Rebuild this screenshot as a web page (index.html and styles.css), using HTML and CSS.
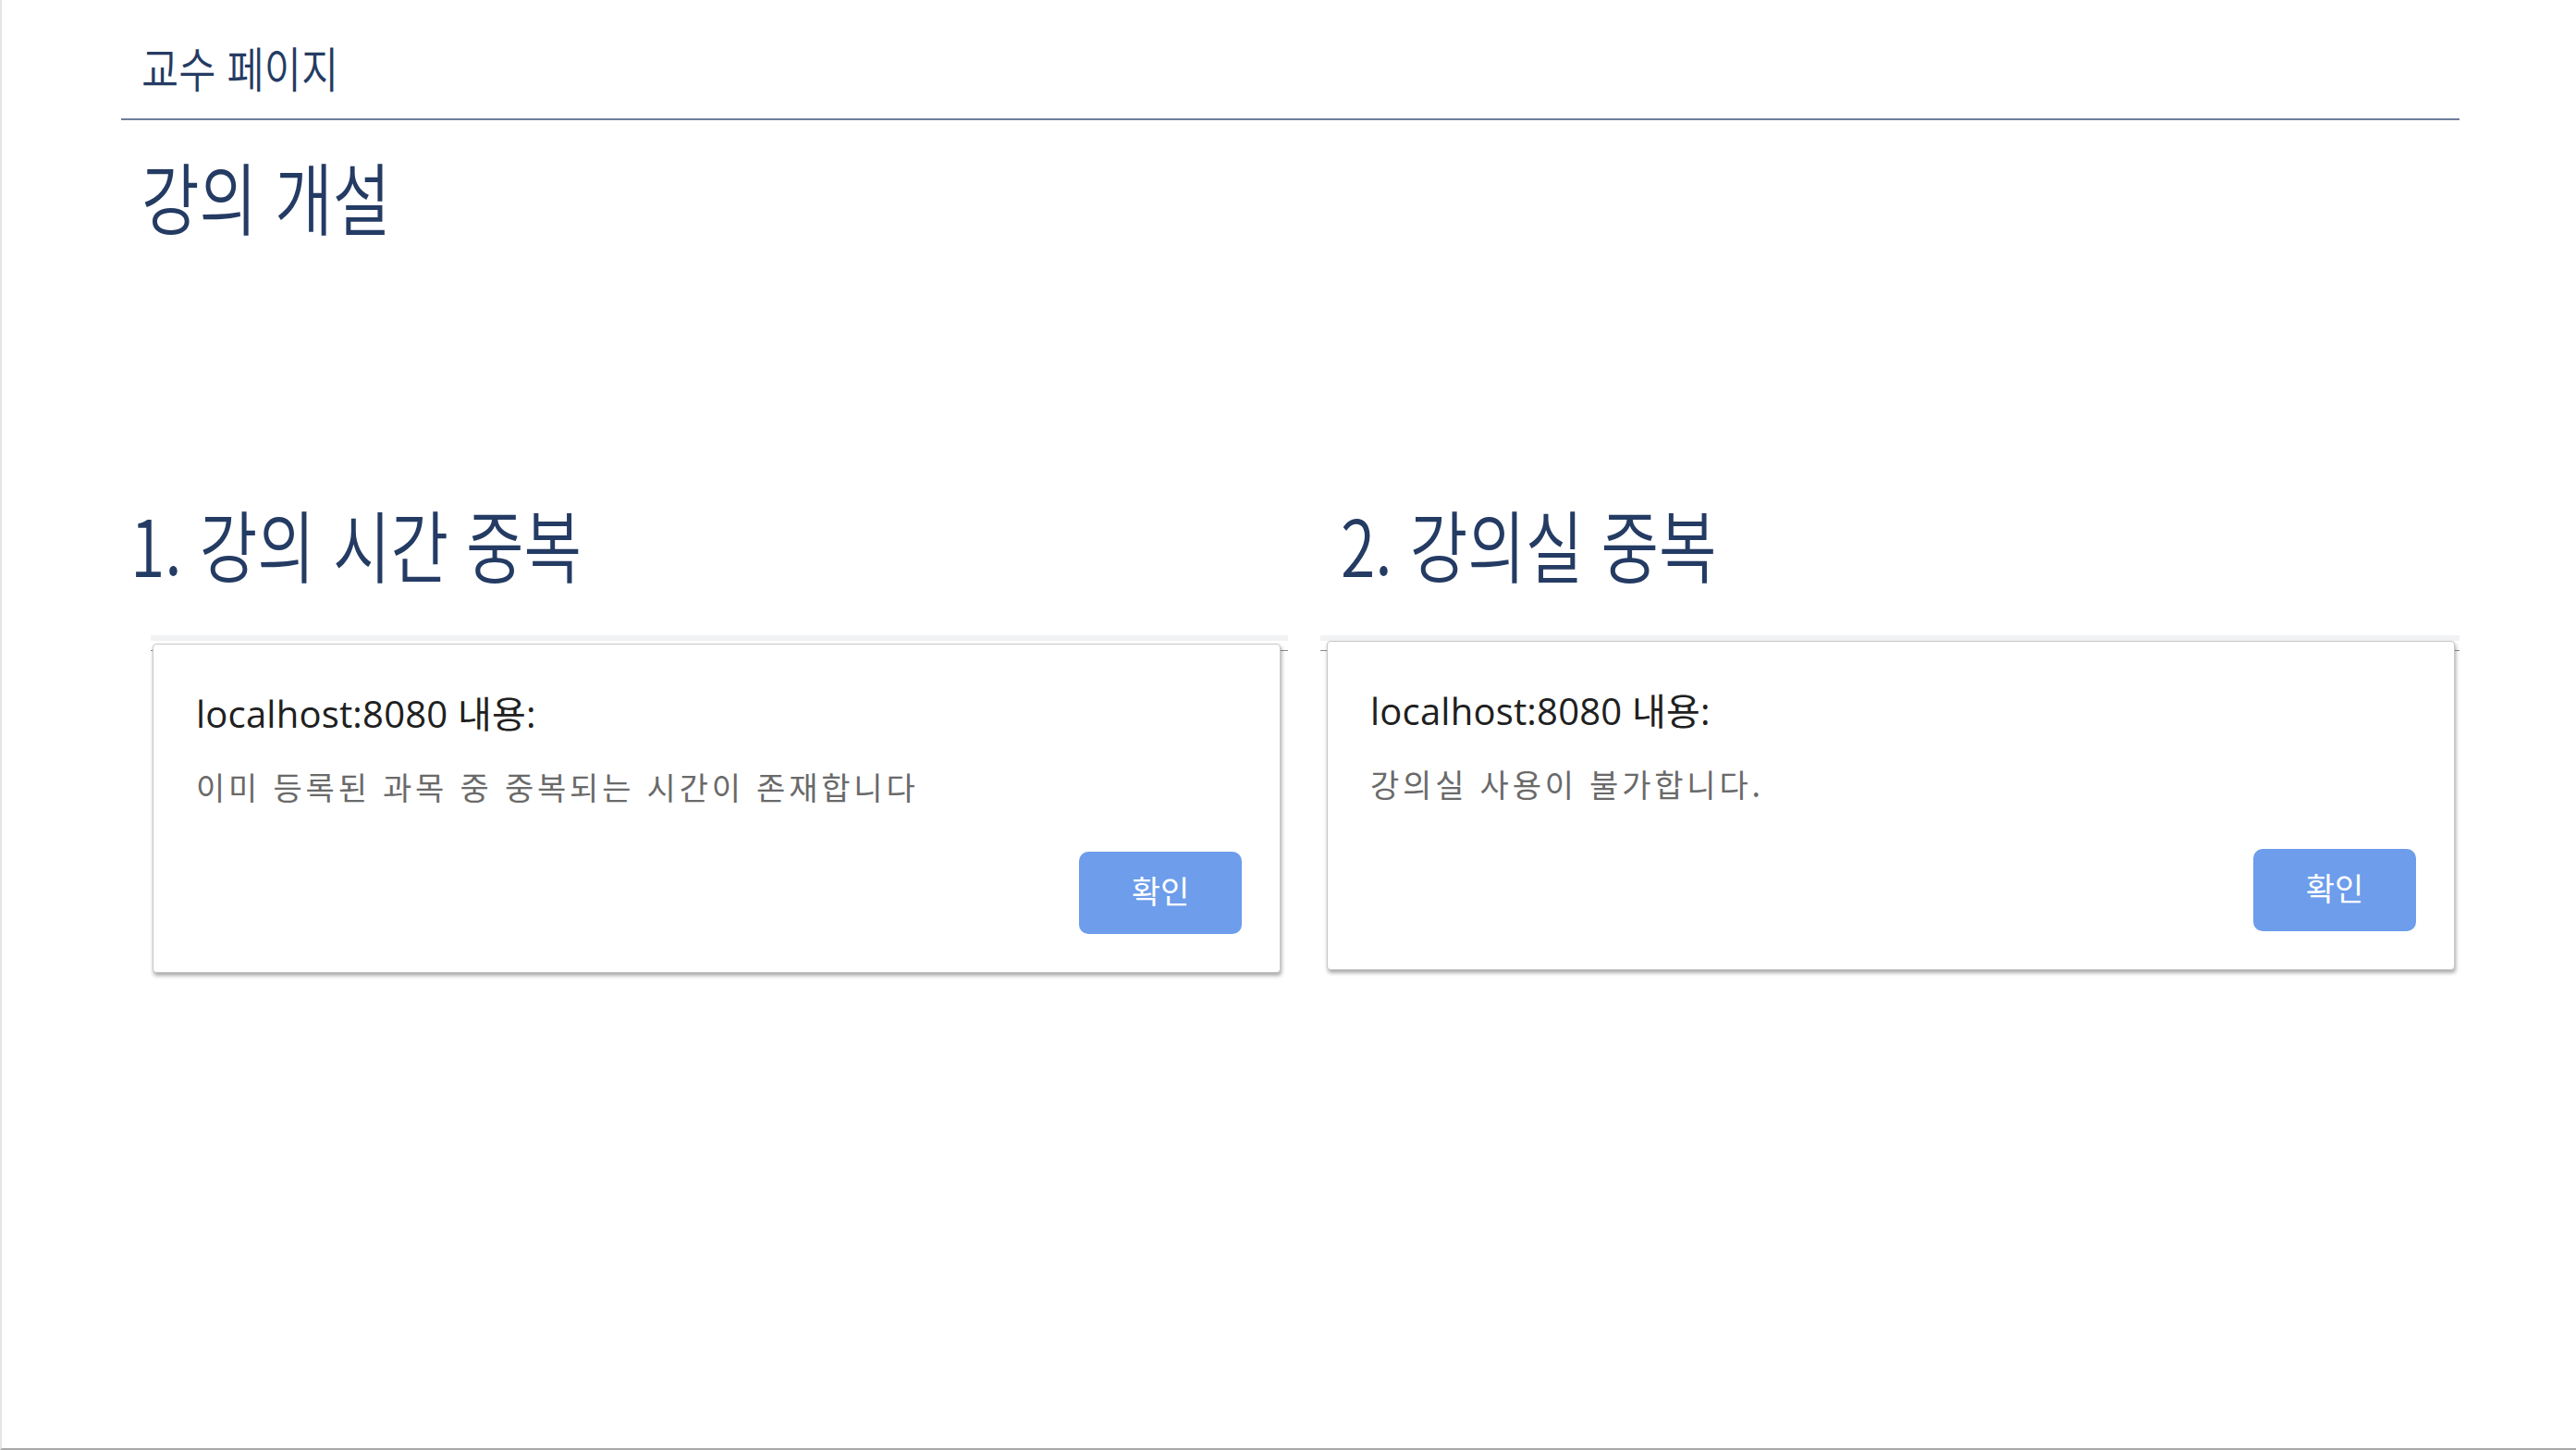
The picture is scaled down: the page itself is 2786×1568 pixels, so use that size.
FILE: index.html
```html
<!DOCTYPE html>
<html lang="ko">
<head>
<meta charset="utf-8">
<title>교수 페이지 - 강의 개설</title>
<link rel="stylesheet" href="styles.css">
</head>
<body>
<div class="slide">
  <header class="top">
    <span class="cond cond-small top-title">교수 페이지</span>
  </header>
  <h1 class="page-title"><span class="cond">강의 개설</span></h1>
  <main class="cases">
    <section class="case case-time">
      <h2 class="case-title"><span class="cond">1. 강의 시간 중복</span></h2>
      <div class="shot shot-time">
        <div class="dialog">
          <p class="dlg-title">localhost:8080 내용:</p>
          <p class="dlg-msg">이미 등록된 과목 중 중복되는 시간이 존재합니다</p>
          <div class="dlg-actions"><button class="dlg-btn" type="button">확인</button></div>
        </div>
      </div>
    </section>
    <section class="case case-room">
      <h2 class="case-title"><span class="cond">2. 강의실 중복</span></h2>
      <div class="shot shot-room">
        <div class="dialog">
          <p class="dlg-title">localhost:8080 내용:</p>
          <p class="dlg-msg">강의실 사용이 불가합니다.</p>
          <div class="dlg-actions"><button class="dlg-btn" type="button">확인</button></div>
        </div>
      </div>
    </section>
  </main>
</div>
</body>
</html>
```
FILE: styles.css
```css
html, body {
  margin: 0;
  padding: 0;
  background: #ffffff;
}

.slide {
  width: 2786px;
  height: 1568px;
  box-sizing: border-box;
  border-left: 2px solid #e4e4e4;
  border-bottom: 2px solid #a9a9a9;
  overflow: hidden;
  font-family: "Noto Sans CJK KR", sans-serif;
  color: #243b63;
}

.cond {
  display: inline-block;
  transform: scaleX(0.80);
  transform-origin: left center;
  white-space: nowrap;
}

.cond-small {
  transform: scaleX(0.84);
}

.top {
  box-sizing: border-box;
  height: 130px;
  width: 2529px;
  margin-left: 129px;
  padding: 47px 0 0 22px;
  border-bottom: 2px solid #6e7e9c;
}

.top-title {
  font-size: 52px;
  line-height: 52px;
  font-weight: 350;
}

.page-title {
  margin: 38px 0 0 151px;
  font-size: 85px;
  line-height: 85px;
  font-weight: 350;
}

.cases {
  display: grid;
  grid-template-columns: 1252px 1232px;
  column-gap: 35px;
  margin-top: 291px;
  padding-left: 139px;
}

.case-title {
  margin: 0;
  font-size: 85px;
  line-height: 85px;
  font-weight: 350;
}

.case-room .case-title {
  padding-left: 22px;
}

.shot {
  margin-top: 58px;
  background:
    linear-gradient(#f1f2f4, #f1f2f4) 0 0 / 100% 6px no-repeat,
    linear-gradient(#8c8c8c, #8c8c8c) 0 16px / 100% 1px no-repeat;
  padding-bottom: 8px;
}

.shot-time {
  margin-left: 22px;
  width: 1230px;
  padding: 9px 8px 8px 2px;
  box-sizing: border-box;
}

.shot-room {
  width: 1232px;
  padding: 6px 5px 8px 7px;
  box-sizing: border-box;
}

.dialog {
  background: #ffffff;
  border: 1px solid #c8c8c8;
  border-radius: 4px;
  box-shadow: 1px 3px 4px rgba(0, 0, 0, 0.35);
  padding: 51px 41px 41px 46px;
}

.dlg-title {
  margin: 0;
  font-family: "Open Sans", "Noto Sans CJK KR", sans-serif;
  font-size: 40px;
  line-height: 48px;
  color: #202020;
  letter-spacing: 0.2px;
}

.dlg-msg {
  margin: 35px 0 0 0;
  font-family: "Noto Sans CJK KR", sans-serif;
  font-size: 34px;
  line-height: 40px;
  color: #6a6a6a;
  letter-spacing: 3.8px;
}

.dlg-actions {
  display: flex;
  justify-content: flex-end;
  margin-top: 50px;
}

.dlg-btn {
  width: 176px;
  height: 89px;
  border: none;
  border-radius: 10px;
  background: #6d9deb;
  color: #ffffff;
  font-family: "Noto Sans CJK KR", sans-serif;
  font-size: 34px;
  line-height: 1;
  padding: 0 0 6px 0;
}
```
